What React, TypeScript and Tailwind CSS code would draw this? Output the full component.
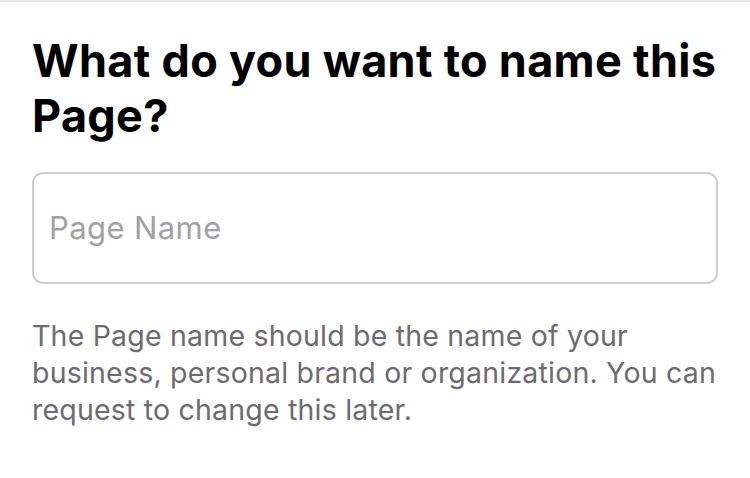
import React from "react";

export default function App() {
  return (
    <div
      className="w-[750px] h-[478px] bg-white border-t-2 border-[#e8e8ea] overflow-hidden"
      style={{ fontFamily: "Inter, 'Noto Sans', sans-serif" }}
    >
      <div className="px-[32px] pt-[31px]">
        <h1 className="text-[45px] leading-[55px] font-bold text-black tracking-[0.3px]">
          What do you want to name this Page?
        </h1>
        <div className="mt-[29px] h-[112px] rounded-[11px] border-2 border-[#cfcfd2] flex items-center px-[15px]">
          <input
            className="w-full outline-none bg-transparent text-[31px] tracking-[0.4px] text-black placeholder:text-[#a1a1a6]"
            placeholder="Page Name"
          />
        </div>
        <p className="mt-[33px] w-[716px] text-[28.5px] leading-[37px] tracking-[0.2px] text-[#6c6c70]">
          The Page name should be the name of your business, personal brand or
          organization. You can request to change this later.
        </p>
      </div>
    </div>
  );
}
